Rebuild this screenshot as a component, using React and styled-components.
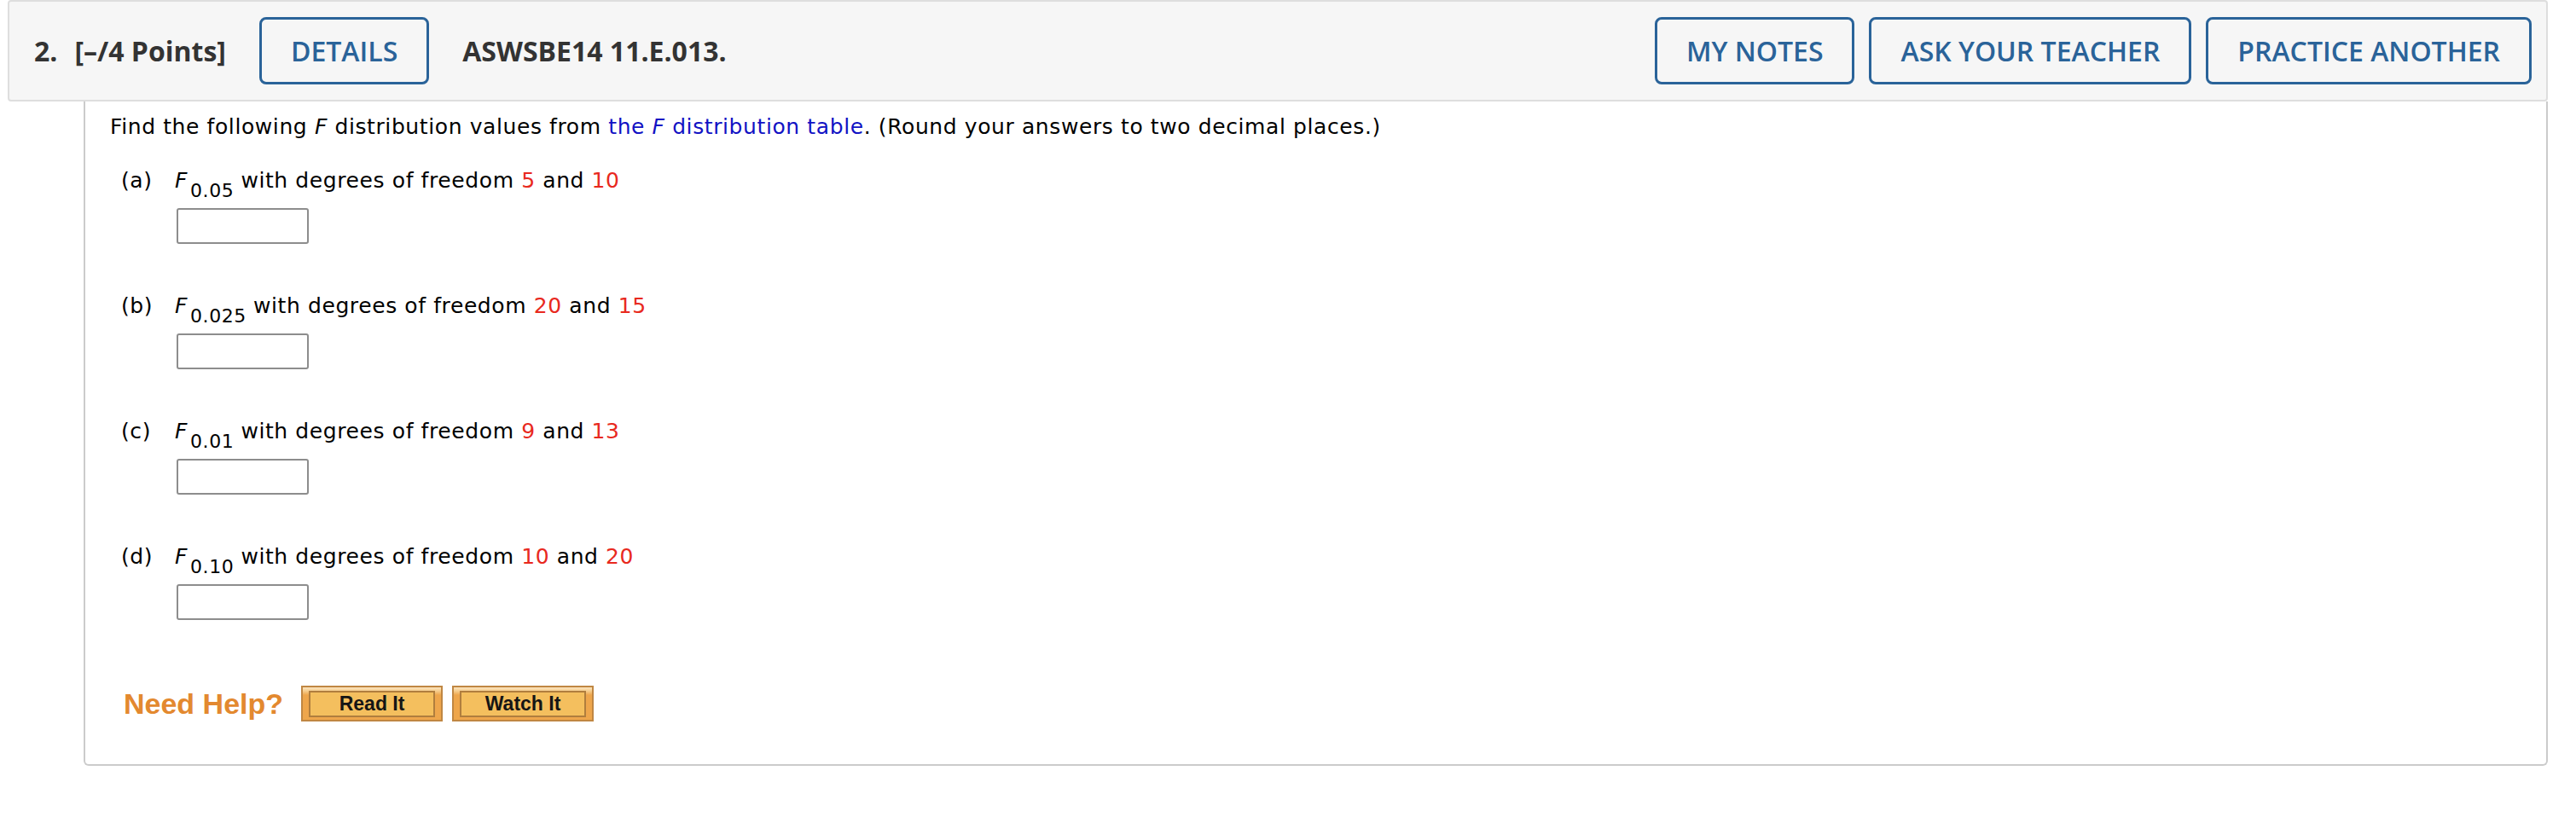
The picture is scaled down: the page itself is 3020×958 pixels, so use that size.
import React from 'react';
import styled, { createGlobalStyle } from 'styled-components';

const GlobalStyle = createGlobalStyle`
  body {
    margin: 0;
    background: #fff;
  }
`;

const Page = styled.div`
  padding: 0 33px 0 9px;
`;

const Header = styled.div`
  display: flex;
  align-items: center;
  height: 119px;
  box-sizing: border-box;
  padding: 0 17px 0 29px;
  background: #f6f6f6;
  border: 2px solid #dedede;
  border-radius: 4px;
  font-family: "Open Sans", "Liberation Sans", sans-serif;
  color: #333;
`;

const Number = styled.span`
  font-size: 32px;
  font-weight: 700;
`;

const Points = styled.span`
  font-size: 32px;
  font-weight: 700;
  margin-left: 20px;
`;

const Title = styled.span`
  font-size: 32px;
  font-weight: 700;
`;

const OutlineButton = styled.button`
  height: 79px;
  box-sizing: border-box;
  padding: 0 34px;
  margin: ${p => p.$spaced ? '0 39px' : '0'};
  background: transparent;
  border: 3px solid #2a6399;
  border-radius: 8px;
  color: #2a6399;
  font-family: "Open Sans", "Liberation Sans", sans-serif;
  font-size: 32px;
  font-weight: 600;
  white-space: nowrap;
`;

const Actions = styled.div`
  display: flex;
  gap: 17px;
  margin-left: auto;
`;

const Panel = styled.div`
  margin-left: 89px;
  border: 2px solid #cbcbcb;
  border-top: none;
  border-radius: 0 0 6px 6px;
  padding: 14px 29px 50px;
  font-family: "DejaVu Sans", Verdana, sans-serif;
  font-size: 25px;
  letter-spacing: 0.6px;
  line-height: 32px;
  color: #000;
`;

const Intro = styled.div``;

const Link = styled.a`
  color: #1212c4;
  text-decoration: none;
`;

const Var = styled.i`
  font-style: italic;
`;

const Parts = styled.div`
  display: flex;
  flex-direction: column;
  gap: 57px;
  margin: 31px 0 0 13px;
`;

const Part = styled.div`
  display: grid;
  grid-template-columns: 63px auto;
  justify-content: start;
`;

const Label = styled.span``;

const Body = styled.div`
  display: flex;
  flex-direction: column;
  align-items: flex-start;
`;

const Sub = styled.sub`
  font-size: 22px;
  vertical-align: -11px;
  line-height: 0;
  margin: 0 8px 0 3px;
`;

const Red = styled.span`
  color: #e8291e;
`;

const AnswerBox = styled.input`
  width: 155px;
  height: 42px;
  box-sizing: border-box;
  margin: 16px 0 0 2px;
  border: 2px solid #8d8d8d;
  border-radius: 3px;
  background: #fff;
`;

const HelpRow = styled.div`
  display: flex;
  align-items: center;
  margin-top: 77px;
`;

const NeedHelp = styled.span`
  margin: 0 21px 0 16px;
  font-family: "Liberation Sans", Arial, sans-serif;
  font-weight: 700;
  font-size: 34px;
  letter-spacing: 0;
  line-height: 42px;
  color: #e3892f;
`;

const HelpButton = styled.button`
  width: ${p => p.$w}px;
  height: 42px;
  box-sizing: border-box;
  margin-right: 11px;
  padding: 4px 7px 3px;
  border: 2px solid #c08743;
  background: linear-gradient(to bottom, #fbe4bf 0, #f7cf90 4px, #eea64c 9px, #eea64c 100%);
  cursor: pointer;
`;

const HelpFace = styled.span`
  display: flex;
  align-items: center;
  justify-content: center;
  height: 100%;
  box-sizing: border-box;
  border: 2px solid #b07e3e;
  background: #f4bf5e;
  font-family: "Liberation Sans", Arial, sans-serif;
  font-weight: 700;
  font-size: 23px;
  color: #151515;
`;

const parts = [
  { label: '(a)', sub: '0.05', a: '5', b: '10' },
  { label: '(b)', sub: '0.025', a: '20', b: '15' },
  { label: '(c)', sub: '0.01', a: '9', b: '13' },
  { label: '(d)', sub: '0.10', a: '10', b: '20' },
];

export default function App() {
  return (
    <Page>
      <GlobalStyle />
      <Header>
        <Number>2.</Number>
        <Points>[–/4 Points]</Points>
        <OutlineButton $spaced>DETAILS</OutlineButton>
        <Title>ASWSBE14 11.E.013.</Title>
        <Actions>
          <OutlineButton>MY NOTES</OutlineButton>
          <OutlineButton>ASK YOUR TEACHER</OutlineButton>
          <OutlineButton>PRACTICE ANOTHER</OutlineButton>
        </Actions>
      </Header>
      <Panel>
        <Intro>
          Find the following <Var>F</Var> distribution values from{' '}
          <Link href="#">the <Var>F</Var> distribution table</Link>. (Round your answers to two decimal places.)
        </Intro>
        <Parts>
          {parts.map(p => (
            <Part key={p.label}>
              <Label>{p.label}</Label>
              <Body>
                <span>
                  <Var>F</Var><Sub>{p.sub}</Sub>with degrees of freedom <Red>{p.a}</Red> and <Red>{p.b}</Red>
                </span>
                <AnswerBox type="text" />
              </Body>
            </Part>
          ))}
        </Parts>
        <HelpRow>
          <NeedHelp>Need Help?</NeedHelp>
          <HelpButton $w={166}><HelpFace>Read It</HelpFace></HelpButton>
          <HelpButton $w={166}><HelpFace>Watch It</HelpFace></HelpButton>
        </HelpRow>
      </Panel>
    </Page>
  );
}
